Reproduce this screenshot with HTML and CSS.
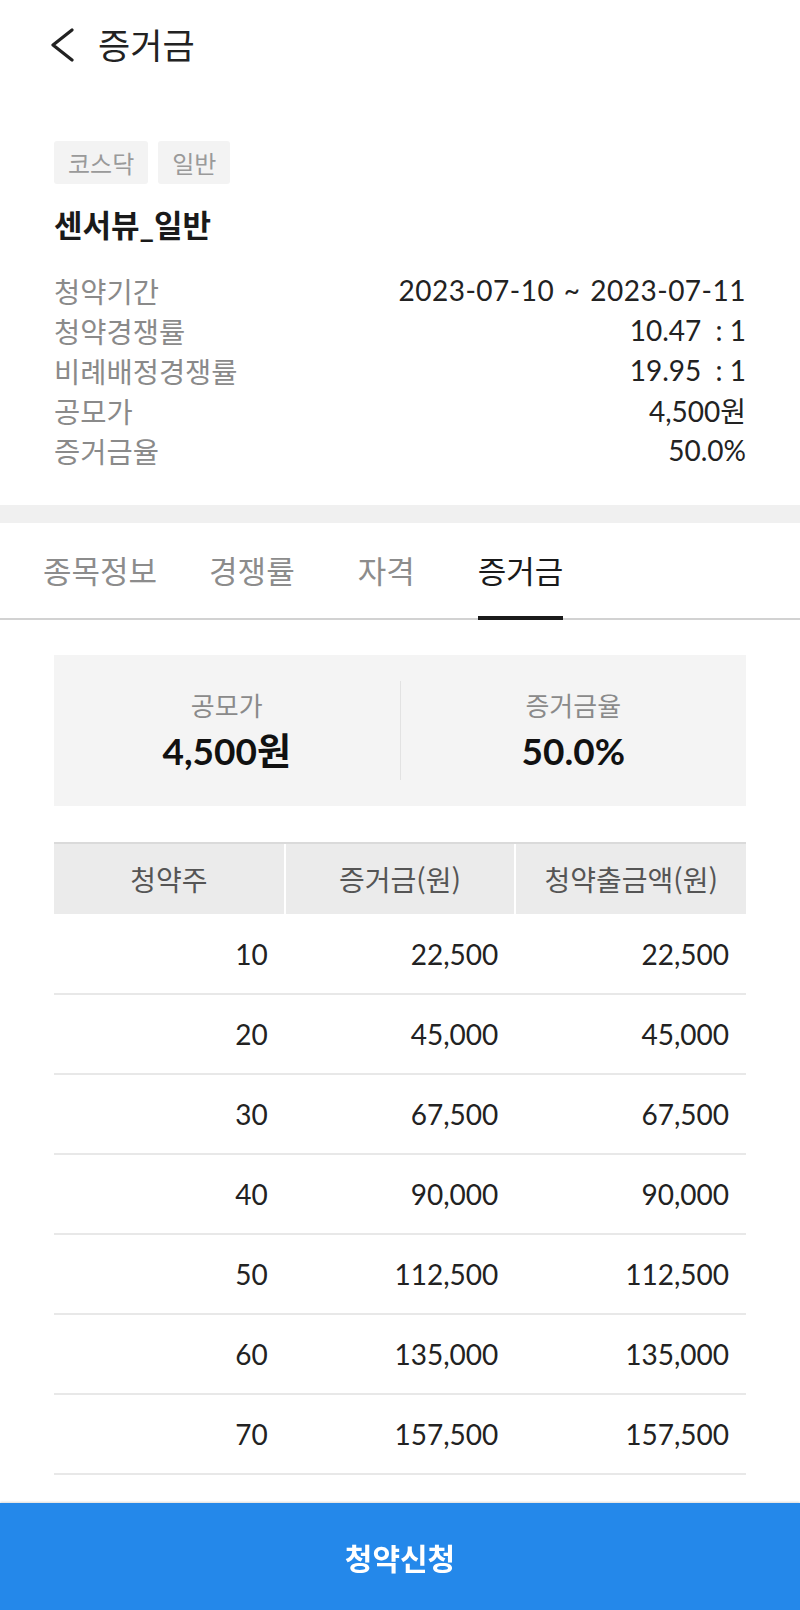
FILE: index.html
```html
<!DOCTYPE html>
<html lang="ko">
<head>
<meta charset="utf-8">
<title>증거금</title>
<link rel="stylesheet" href="styles.css">
</head>
<body>
<div class="page">
  <header class="topbar">
    <svg class="back" width="26" height="34" viewBox="0 0 26 34" aria-hidden="true">
      <polyline points="22,2 3,17 22,32" fill="none" stroke="#222" stroke-width="3.2" stroke-linecap="round" stroke-linejoin="round"/>
    </svg>
    <h1 class="title">증거금</h1>
  </header>

  <section class="info">
    <div class="tags">
      <span class="tag">코스닥</span>
      <span class="tag">일반</span>
    </div>
    <h2 class="name">센서뷰_일반</h2>
    <dl class="rows">
      <div class="row"><dt>청약기간</dt><dd class="date">2023-07-10 ~ 2023-07-11</dd></div>
      <div class="row"><dt>청약경쟁률</dt><dd>10.47&nbsp; : 1</dd></div>
      <div class="row"><dt>비례배정경쟁률</dt><dd>19.95&nbsp; : 1</dd></div>
      <div class="row"><dt>공모가</dt><dd>4,500원</dd></div>
      <div class="row"><dt>증거금율</dt><dd>50.0%</dd></div>
    </dl>
  </section>

  <div class="band"></div>

  <nav class="tabs">
    <span class="tab">종목정보</span>
    <span class="tab">경쟁률</span>
    <span class="tab">자격</span>
    <span class="tab active">증거금</span>
  </nav>

  <section class="content">
    <div class="summary">
      <div class="sum-col">
        <div class="sum-label">공모가</div>
        <div class="sum-value">4,500원</div>
      </div>
      <div class="sum-divider"></div>
      <div class="sum-col">
        <div class="sum-label">증거금율</div>
        <div class="sum-value">50.0%</div>
      </div>
    </div>

    <table class="grid">
      <thead>
        <tr><th>청약주</th><th>증거금(원)</th><th>청약출금액(원)</th></tr>
      </thead>
      <tbody>
        <tr><td>10</td><td>22,500</td><td>22,500</td></tr>
        <tr><td>20</td><td>45,000</td><td>45,000</td></tr>
        <tr><td>30</td><td>67,500</td><td>67,500</td></tr>
        <tr><td>40</td><td>90,000</td><td>90,000</td></tr>
        <tr><td>50</td><td>112,500</td><td>112,500</td></tr>
        <tr><td>60</td><td>135,000</td><td>135,000</td></tr>
        <tr><td>70</td><td>157,500</td><td>157,500</td></tr>
      </tbody>
    </table>
  </section>

  <button class="cta" type="button">청약신청</button>
</div>
</body>
</html>
```

FILE: styles.css
```css
* { box-sizing: border-box; }

html, body {
  margin: 0;
  padding: 0;
  background: #fff;
}

body {
  font-family: Lato, "Noto Sans CJK KR", sans-serif;
  color: #222;
}

.page {
  width: 800px;
  padding-bottom: 120px;
}

.topbar {
  height: 88px;
  display: flex;
  align-items: center;
  padding-left: 50px;
  gap: 22px;
}

.back {
  display: block;
  margin-top: 2px;
}

.title {
  margin: 0;
  font-family: "Noto Sans CJK KR", sans-serif;
  font-size: 35px;
  font-weight: 400;
  line-height: 40px;
  color: #222;
}

.info {
  padding: 53px 54px 0 54px;
}

.tags {
  display: flex;
  gap: 10px;
}

.tag {
  height: 43px;
  padding: 0 14px;
  display: flex;
  align-items: center;
  background: #f3f3f3;
  border-radius: 3px;
  color: #9a9a9a;
  font-family: "Noto Sans CJK KR", sans-serif;
  font-size: 24px;
}

.name {
  margin: 21px 0 0 0;
  font-size: 31px;
  font-weight: 700;
  line-height: 40px;
  color: #1a1a1a;
}

.rows {
  margin: 25px 0 0 0;
}

.row {
  height: 40px;
  display: flex;
  align-items: center;
  justify-content: space-between;
}

.row dt {
  font-family: "Noto Sans CJK KR", sans-serif;
  font-size: 28.5px;
  color: #8a8a8a;
}

.row dd {
  margin: 0;
  font-size: 28px;
  color: #222;
}

.row dd.date {
  letter-spacing: 0.5px;
  word-spacing: 2px;
}

.band {
  height: 18px;
  margin-top: 35px;
  background: #f0f0f0;
}

.tabs {
  display: flex;
  gap: 63px;
  padding-left: 43px;
  height: 97px;
  border-bottom: 2px solid #d2d2d2;
}

.tab {
  display: flex;
  align-items: center;
  height: 97px;
  padding-bottom: 4px;
  font-family: "Noto Sans CJK KR", sans-serif;
  font-size: 31px;
  color: #8c8c8c;
}

.tab:first-child {
  margin-right: -11px;
}

.tab.active {
  color: #1a1a1a;
  border-bottom: 4px solid #1a1a1a;
  padding-bottom: 0;
}

.content {
  padding: 35px 54px 0 54px;
}

.summary {
  height: 151px;
  background: #f4f4f4;
  display: flex;
  align-items: center;
}

.sum-col {
  flex: 1;
  display: flex;
  flex-direction: column;
  align-items: center;
  gap: 10px;
}

.sum-divider {
  width: 1px;
  height: 99px;
  background: #e2e2e2;
}

.sum-label {
  font-family: "Noto Sans CJK KR", sans-serif;
  font-size: 26px;
  line-height: 30px;
  color: #8a8a8a;
}

.sum-value {
  font-size: 37px;
  line-height: 42px;
  font-weight: 700;
  color: #111;
}

.grid {
  width: 100%;
  margin-top: 36px;
  border-collapse: collapse;
  table-layout: fixed;
}

.grid thead th {
  height: 71px;
  background: #ebebeb;
  border-top: 2px solid #dadada;
  font-family: "Noto Sans CJK KR", sans-serif;
  font-size: 28px;
  font-weight: 400;
  color: #555;
  text-align: center;
  padding: 0;
}

.grid thead th + th {
  border-left: 2px solid #fff;
}

.grid tbody td {
  height: 80px;
  border-bottom: 2px solid #e8e8e8;
  text-align: right;
  padding: 0 17px 0 0;
  font-size: 28px;
  color: #222;
}

.cta {
  position: fixed;
  left: 0;
  bottom: 0;
  width: 800px;
  height: 107px;
  border: 0;
  margin: 0;
  background: #2488ea;
  box-shadow: 0 -1px 2px rgba(0, 0, 0, 0.15);
  color: #fff;
  font-family: "Noto Sans CJK KR", sans-serif;
  font-size: 30px;
  font-weight: 700;
  cursor: pointer;
}
```
